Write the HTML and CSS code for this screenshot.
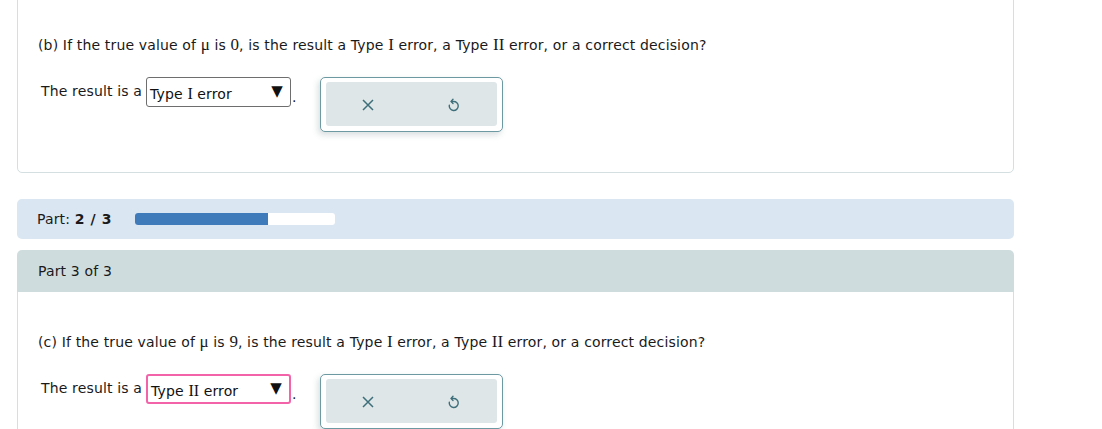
FILE: index.html
```html
<!DOCTYPE html>
<html lang="en">
<head>
    <meta charset="UTF-8">
    <meta name="viewport" content="width=device-width, initial-scale=1.0">
    <title>Hypothesis test - Part 3</title>
    <link rel="stylesheet" href="styles.css">
</head>
<body>
    <div class="pagina">
        <div class="cartao cartao-topo">
            <p class="pergunta">(b) If the true value of <span class="mat">μ</span> is <span class="mat">0</span>, is the result a Type <span class="mat">I</span> error, a Type <span class="mat">II</span> error, or a correct decision?</p>
            <div class="resposta">
                <span>The result is a</span>
                <div class="seletor">
                    <span>Type <span class="mat">I</span> error</span>
                    <span class="seta">▼</span>
                </div>
                <span class="ponto">.</span>
                <div class="acoes">
                    <div class="acoes-fundo">
                        <button class="acao" title="Clear">
                            <svg width="12" height="12" viewBox="0 0 12 12"><path d="M1 1 L11 11 M11 1 L1 11" stroke="currentColor" stroke-width="1.5" fill="none"/></svg>
                        </button>
                        <button class="acao" title="Undo">
                            <svg width="13" height="14" viewBox="0 0 13 14"><path d="M2.3 7.2 A4.5 4.5 0 1 0 6.5 3.5 L4.4 3.5" stroke="currentColor" stroke-width="1.4" fill="none" stroke-linecap="round"/><path d="M6 1.3 L4.1 3.5 L6 5.5" stroke="currentColor" stroke-width="1.4" fill="none" stroke-linecap="round" stroke-linejoin="round"/></svg>
                        </button>
                    </div>
                </div>
            </div>
        </div>

        <div class="progresso">
            <span>Part: <b>2 / 3</b></span>
            <div class="barra"><div class="barra-cheia" style="width: 66.5%"></div></div>
        </div>

        <div class="parte">
            <div class="parte-titulo">Part 3 of 3</div>
            <div class="cartao cartao-parte">
                <p class="pergunta">(c) If the true value of <span class="mat">μ</span> is <span class="mat">9</span>, is the result a Type <span class="mat">I</span> error, a Type <span class="mat">II</span> error, or a correct decision?</p>
                <div class="resposta">
                    <span>The result is a</span>
                    <div class="seletor seletor-ativo">
                        <span>Type <span class="mat">II</span> error</span>
                        <span class="seta">▼</span>
                    </div>
                    <span class="ponto">.</span>
                    <div class="acoes">
                        <div class="acoes-fundo">
                            <button class="acao" title="Clear">
                                <svg width="12" height="12" viewBox="0 0 12 12"><path d="M1 1 L11 11 M11 1 L1 11" stroke="currentColor" stroke-width="1.5" fill="none"/></svg>
                            </button>
                            <button class="acao" title="Undo">
                                <svg width="13" height="14" viewBox="0 0 13 14"><path d="M2.3 7.2 A4.5 4.5 0 1 0 6.5 3.5 L4.4 3.5" stroke="currentColor" stroke-width="1.4" fill="none" stroke-linecap="round"/><path d="M6 1.3 L4.1 3.5 L6 5.5" stroke="currentColor" stroke-width="1.4" fill="none" stroke-linecap="round" stroke-linejoin="round"/></svg>
                            </button>
                        </div>
                    </div>
                </div>
            </div>
        </div>
    </div>
</body>
</html>
```

FILE: styles.css
```css
body {
    margin: 0;
    background-color: #fff;
    font-family: "DejaVu Sans", Verdana, sans-serif;
    font-size: 14px;
    letter-spacing: 0.15px;
    color: #1a1a1a;
    overflow: hidden;
}

.pagina {
    width: 997px;
    padding-left: 17px;
}

.cartao {
    background-color: #fff;
    border: 1px solid #d3dfe0;
    padding: 40px 20px 40px 20px;
}

.cartao-topo {
    margin-top: -6px;
    border-radius: 0 0 5px 5px;
}

.cartao-parte {
    border-top: none;
    border-bottom: none;
    padding-top: 40px;
    height: 200px;
}

.pergunta {
    margin: 0;
    line-height: 20px;
}

.mat {
    font-family: "Liberation Serif", "Times New Roman", serif;
    font-size: 17px;
    letter-spacing: 0;
}

.resposta {
    display: flex;
    align-items: flex-start;
    margin-top: 22px;
    padding-left: 3px;
}

.resposta > span:first-child {
    line-height: 28px;
    margin-right: 4px;
}

.seletor {
    width: 137px;
    height: 28px;
    border: 1px solid #6e6e6e;
    border-radius: 3px;
    padding: 0 3px 0 3px;
    display: flex;
    justify-content: space-between;
    align-items: center;
    font-size: 14px;
    color: #111;
}

.seletor > span:first-child {
    margin-top: 3px;
}

.seletor .mat {
    font-size: 16px;
}

.seletor-ativo {
    border: 2px solid #f263aa;
    width: 135px;
    height: 26px;
}

.seta {
    font-size: 15px;
    margin-top: -3px;
    margin-right: 4px;
}

.ponto {
    line-height: 28px;
    padding-top: 6px;
    margin-left: 1px;
    margin-right: 23px;
}

.acoes {
    width: 171px;
    height: 44px;
    padding: 4px 5px 5px 5px;
    border: 1px solid #6d99a2;
    border-radius: 5px;
    background-color: #fff;
    box-shadow: -2px 3px 6px rgba(40, 70, 80, 0.18);
}

.acoes-fundo {
    display: flex;
    height: 100%;
    background-color: #dfe6e8;
    border-radius: 3px;
}

.acao {
    flex: 1;
    border: none;
    background: none;
    padding: 0;
    color: #3d6f7a;
    display: flex;
    justify-content: center;
    align-items: center;
    padding-top: 2px;
    cursor: pointer;
}

.progresso {
    margin-top: 26px;
    height: 40px;
    background-color: #dae6f1;
    border-radius: 5px;
    display: flex;
    align-items: center;
    padding-left: 20px;
}

.progresso b {
    letter-spacing: 0.6px;
}

.barra {
    margin-left: 23px;
    width: 200px;
    height: 12px;
    background-color: #fff;
    border-radius: 3px;
    overflow: hidden;
}

.barra-cheia {
    height: 100%;
    background-color: #3f7bbb;
}

.parte {
    margin-top: 11px;
}

.parte-titulo {
    height: 42px;
    line-height: 42px;
    background-color: #cfdcdd;
    border-radius: 5px 5px 0 0;
    padding-left: 21px;
}
```
